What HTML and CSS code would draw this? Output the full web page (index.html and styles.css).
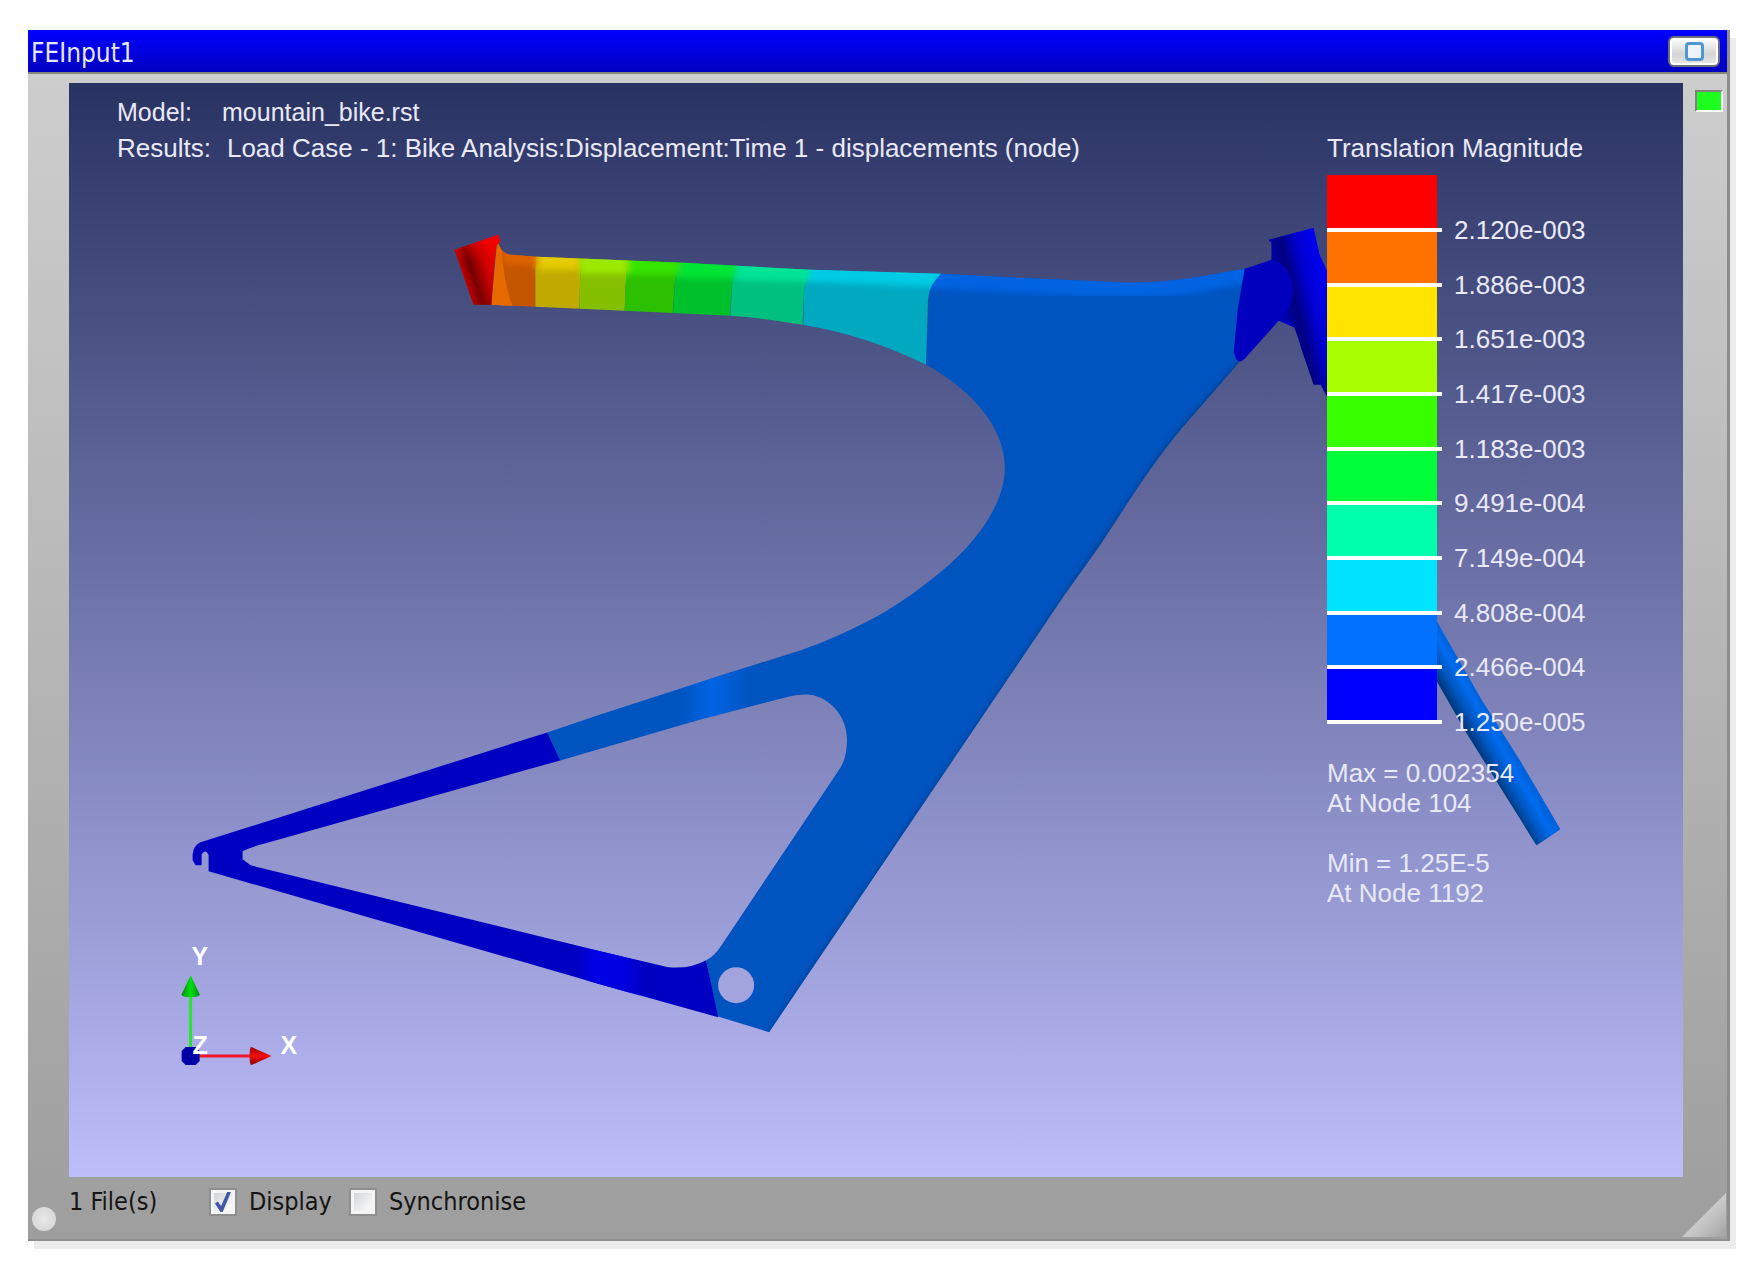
FILE: index.html
```html
<!DOCTYPE html>
<html lang="en">
<head>
<meta charset="utf-8">
<title>FEInput1</title>
<link rel="stylesheet" href="styles.css">
</head>
<body>
<div class="window">
  <header class="titlebar">
    <h1 class="title">FEInput1</h1>
    <button class="maximise" type="button" aria-label="Maximise"><span class="maximise-icon"></span></button>
  </header>

  <div class="workspace">
    <main class="viewport">
      <svg class="scene" viewBox="69 83 1614 1095" aria-hidden="true">
        <defs>
          <linearGradient id="redTube" gradientUnits="userSpaceOnUse" x1="462" y1="280" x2="498" y2="268">
            <stop offset="0" stop-color="#d80000"/><stop offset=".3" stop-color="#6e0000"/><stop offset=".65" stop-color="#c40000"/><stop offset="1" stop-color="#f00000"/>
          </linearGradient>
          <linearGradient id="redTop" x1="0" y1="0" x2="0" y2="1">
            <stop offset="0" stop-color="#ff0000" stop-opacity=".6"/><stop offset=".4" stop-color="#e00000" stop-opacity="0"/><stop offset="1" stop-color="#a00000" stop-opacity=".25"/>
          </linearGradient>
          <linearGradient id="strutLight" gradientUnits="userSpaceOnUse" x1="680" y1="0" x2="750" y2="0">
            <stop offset="0" stop-color="#0064e4" stop-opacity="0"/><stop offset=".45" stop-color="#0064e4"/><stop offset="1" stop-color="#0064e4" stop-opacity="0"/>
          </linearGradient>
          <linearGradient id="stayLight" gradientUnits="userSpaceOnUse" x1="575" y1="0" x2="645" y2="0">
            <stop offset="0" stop-color="#0000e6" stop-opacity="0"/><stop offset=".3" stop-color="#0000e6"/><stop offset=".7" stop-color="#0000e0"/><stop offset="1" stop-color="#0000e0" stop-opacity="0"/>
          </linearGradient>
          <linearGradient id="forkTube" gradientUnits="userSpaceOnUse" x1="1487" y1="764" x2="1511" y2="750">
            <stop offset="0" stop-color="#003a80"/><stop offset=".35" stop-color="#0056c0"/><stop offset=".75" stop-color="#006cf0"/><stop offset="1" stop-color="#0062dc"/>
          </linearGradient>
          <linearGradient id="headTube" gradientUnits="userSpaceOnUse" x1="1281" y1="310" x2="1332" y2="298">
            <stop offset="0" stop-color="#0000b4"/><stop offset=".3" stop-color="#000080"/><stop offset=".6" stop-color="#0000d0"/><stop offset="1" stop-color="#0000f6"/>
          </linearGradient>
          <linearGradient id="arrowGreen" x1="0" y1="0" x2="1" y2="0">
            <stop offset="0" stop-color="#008a10"/><stop offset=".5" stop-color="#00e010"/><stop offset="1" stop-color="#008a10"/>
          </linearGradient>
          <linearGradient id="arrowRed" x1="0" y1="0" x2="0" y2="1">
            <stop offset="0" stop-color="#a00000"/><stop offset=".5" stop-color="#f01010"/><stop offset="1" stop-color="#900000"/>
          </linearGradient>
          <filter id="soft" x="-10%" y="-50%" width="120%" height="200%"><feGaussianBlur stdDeviation="3"/></filter>
          <path id="bodyShape" d="M940 274 L1040 279 L1130 283 Q1165 283 1200 277 L1245 269 L1240 362 L1200 408 Q1165 446 1130 500 L1100 546 L1065 595 L1021 660 L769 1033 L717 1017 L706 961 Q714 957 720 948 L838 772 Q847 760 847 740 C847 714 826 695 806 695 Q798 695 789 697 L700 720 L560 761 L547 733 L600 715 L733 672 L800 651 C860 630 900 605 926 584 C975 548 1005 505 1005 468 C1005 428 972 390 926 365 L929 290 Z"/>
          <clipPath id="bodyClip"><use href="#bodyShape"/></clipPath>
          <path id="armShape" d="M497 240 Q500 255 512 255 L537 257 L683 263 L810 270 L941 274 Q929 285 928 300 L926 365 Q865 335 802 325 Q762 318 730 316 L625 311 L535 307 L491 305 Z"/>
          <clipPath id="armClip"><use href="#armShape"/></clipPath>
        </defs>

        <!-- main frame -->
        <use href="#bodyShape" fill="#0054c0"/>
        <g clip-path="url(#bodyClip)">
          <path d="M920 278 L1040 284 L1130 288 Q1165 288 1200 282 L1250 272" fill="none" stroke="#0064e2" stroke-width="20" filter="url(#soft)"/>
          <path d="M1245 360 L1200 411 Q1167 447 1132 502 L1067 597 L1023 662 L771 1035" fill="none" stroke="#003c88" stroke-width="6" filter="url(#soft)"/>
          <path d="M680 600 H750 V780 H680 Z" fill="url(#strutLight)"/>
        </g>

        <!-- graded arm -->
        <g clip-path="url(#armClip)">
          <path d="M480 230 H540 L535 270 V315 H480 Z" fill="#c45600"/>
          <path d="M480 230 H500 Q502 285 514 310 H480 Z" fill="#e66a00"/>
          <path d="M538 230 H577 L580 270 L579 320 H535 V270 Z" fill="#c0aa00"/>
          <path d="M577 230 H629 L626 275 L624 320 H579 L580 270 Z" fill="#84c000"/>
          <path d="M629 230 H682 L675 280 L672 320 H624 L626 275 Z" fill="#2cc000"/>
          <path d="M682 230 H742 L732 285 L729 325 H672 L675 280 Z" fill="#00c02c"/>
          <path d="M742 230 H818 L804 290 L802 335 H729 L732 285 Z" fill="#00c080"/>
          <path d="M818 230 H950 V375 H802 L804 290 Z" fill="#00a8c0"/>
          <g filter="url(#soft)">
            <path d="M500 252 L537 254 V266 L505 264 Z" fill="#e06400"/>
            <path d="M538 252 H578 V270 H537 Z" fill="#e4cc00"/>
            <path d="M579 252 H628 V274 H580 Z" fill="#9ce800"/>
            <path d="M629 254 H681 L678 275 H627 Z" fill="#34e400"/>
            <path d="M682 256 H739 L734 279 H678 Z" fill="#00e434"/>
            <path d="M740 258 H812 L808 282 L734 280 Z" fill="#00e498"/>
            <path d="M813 260 L950 266 L935 287 L808 282 Z" fill="#00cce6"/>
          </g>
        </g>
        <path d="M454 250 L498 235 L500 242 L496 246 L494 265 L491 305 H473 Z" fill="url(#redTube)"/>
        <path d="M454 250 L498 235 L500 242 L496 246 L494 265 L491 305 H473 Z" fill="url(#redTop)"/>

        <!-- head tube -->
        <path d="M1245 269 L1272 260 V243 L1269 240 L1300 232 L1300 330 L1279 321 L1245 359 Q1240 364 1237 360 L1234 353 L1238 310 Z" fill="#0000be"/>
        <path d="M1269 240 L1314 228 L1320 255 L1328 272 V398 L1321 385 H1314 L1302 350 Q1294 322 1290 321 H1279 Q1300 300 1290 275 Q1283 262 1272 260 V243 Z" fill="url(#headTube)"/>

        <!-- rear stays -->
        <path d="M547 733 L560 761 L265 844 Q252 847 242 852 V860 Q246 863 250 866 L600 952 L668 968 Q690 970 706 961 L718 1018 L600 985 L208 872 V856 Q205 849 201 855 V866 H195 L192 861 V855 Q193 846 200 843 Z" fill="#0000c2"/>
        <path d="M575 946 L645 963 V998 L575 978 Z" fill="url(#stayLight)"/>

        <circle cx="736" cy="986" r="18" fill="#a3a3de"/>

        <!-- fork leg -->
        <path d="M1430 608 L1438 623 L1482 700 L1520 760 L1561 830 L1548 839 L1537 846 L1466 732 L1438 683 L1430 668 Z" fill="url(#forkTube)"/>

        <!-- axis triad -->
        <path d="M190 1050 V996" stroke="#20e830" stroke-width="3"/>
        <path d="M190 976 L199 995 Q199 998 190 998 Q181 998 181 995 Z" fill="url(#arrowGreen)"/>
        <path d="M190 1057 H250" stroke="#f01828" stroke-width="3"/>
        <path d="M271 1057 L251 1066 Q249 1066 249 1057 Q249 1048 251 1048 Z" fill="url(#arrowRed)"/>
        <path d="M185 1048 H195 L199 1052 V1062 L195 1066 H185 L181 1062 V1052 Z" fill="#0000a8"/>
        <g class="axis-labels">
          <text x="191" y="966">Y</text>
          <text x="192" y="1055">Z</text>
          <text x="280" y="1055">X</text>
        </g>
      </svg>

      <dl class="model-info">
        <div class="info-row info-model"><dt>Model:</dt><dd>mountain_bike.rst</dd></div>
        <div class="info-row info-results"><dt>Results:</dt><dd>Load Case - 1: Bike Analysis:Displacement:Time 1 - displacements (node)</dd></div>
      </dl>

      <section class="legend">
        <h2 class="legend-title">Translation Magnitude</h2>
        <ul class="scale">
          <li class="band red"><span class="value">2.120e-003</span></li>
          <li class="band orange"><span class="value">1.886e-003</span></li>
          <li class="band yellow"><span class="value">1.651e-003</span></li>
          <li class="band lime"><span class="value">1.417e-003</span></li>
          <li class="band green"><span class="value">1.183e-003</span></li>
          <li class="band emerald"><span class="value">9.491e-004</span></li>
          <li class="band mint"><span class="value">7.149e-004</span></li>
          <li class="band cyan"><span class="value">4.808e-004</span></li>
          <li class="band azure"><span class="value">2.466e-004</span></li>
          <li class="band blue"><span class="value">1.250e-005</span></li>
        </ul>
        <p class="extreme">Max = 0.002354<br>At Node 104</p>
        <p class="extreme">Min = 1.25E-5<br>At Node 1192</p>
      </section>
    </main>
    <aside class="side"><span class="led"></span></aside>
  </div>

  <footer class="statusbar">
    <span class="knob"></span>
    <div class="status-items">
      <span class="files">1 File(s)</span>
      <label class="option option-display"><input class="tick" type="checkbox" checked>Display</label>
      <label class="option"><input class="tick" type="checkbox">Synchronise</label>
    </div>
    <svg class="grip" viewBox="0 0 44 44" aria-hidden="true">
      <defs><linearGradient id="gripFill" x1=".3" y1=".3" x2="1" y2="1"><stop offset="0" stop-color="#d8d8d8"/><stop offset=".5" stop-color="#c0c0c0"/><stop offset="1" stop-color="#a2a2a2"/></linearGradient></defs>
      <path d="M0 44 L44 0 V44 Z" fill="url(#gripFill)"/>
    </svg>
  </footer>
</div>
</body>
</html>
```
FILE: styles.css
```css
* { box-sizing: border-box; }

body {
  margin: 0;
  padding: 30px 31px 31px 28px;
  background: #fff;
  font-family: "DejaVu Sans Condensed", "DejaVu Sans", sans-serif;
}

h1, h2, p, ul, dl, dd { margin: 0; padding: 0; font-weight: normal; }

.window {
  display: flex;
  flex-direction: column;
  min-height: calc(100vh - 61px);
  border-right: 3px solid #8c8c8c;
  border-bottom: 2px solid #909090;
  background: linear-gradient(#cfcfcf, #9e9e9e);
  box-shadow: 6px 8px 0 #ececec, 0 -4px 0 #f7f9f7;
}

.titlebar {
  display: flex;
  align-items: center;
  justify-content: space-between;
  height: 44px;
  padding: 0 7px 0 3px;
  border-bottom: 2px solid #85857c;
  background: linear-gradient(#0000ff, #0000c0);
}

.title { padding-top: 4px; font-size: 26px; line-height: 38px; color: #e6e6ff; }

.maximise {
  display: flex;
  align-items: center;
  justify-content: center;
  width: 52px;
  height: 31px;
  padding: 0;
  border: 2px solid #6f6f78;
  border-radius: 6px;
  background: linear-gradient(#fff, #d4d4d4 60%, #e8e8e8);
  box-shadow: inset 0 0 0 2px #fff;
}

.maximise-icon {
  width: 19px;
  height: 19px;
  border: 3px solid #4f97d2;
  border-radius: 4px;
  background: #eef2ff;
}

.workspace { display: flex; flex: 1; padding: 9px 0 0 41px; }

.viewport {
  position: relative;
  display: flex;
  flex: 1;
  justify-content: space-between;
  align-items: flex-start;
  padding: 11px 0 0 48px;
  background: linear-gradient(#293362, #bdbdfa);
  font-family: "Liberation Sans", Arial, sans-serif;
  font-size: 26px;
  line-height: 30px;
  color: #e9e9f8;
}

.scene { position: absolute; inset: 0; width: 100%; height: 100%; }

.axis-labels { font-weight: bold; font-size: 25px; fill: #fff; }

.model-info, .legend { position: relative; }

.info-row { display: flex; line-height: 36px; white-space: nowrap; }
.info-model { gap: 30px; font-size: 25px; }
.info-results { gap: 16px; }

.legend { width: 356px; padding-top: 36px; }
.legend-title { font-size: 26px; line-height: 36px; }

.scale {
  display: grid;
  grid-template-rows: 57px repeat(9, 1fr);
  height: 549px;
  margin: 9px 0 34px;
  list-style: none;
}

.band {
  position: relative;
  display: flex;
  align-items: flex-end;
  width: 110px;
}

/* tick line, slightly wider than its band */
.band::after {
  content: "";
  position: absolute;
  left: 0;
  right: -5px;
  bottom: 0;
  height: 4px;
  background: #fff;
}

.value { margin: 0 0 -13px 127px; white-space: nowrap; }

.red { background: #ff0000; }
.orange { background: #ff7200; }
.yellow { background: #ffe400; }
.lime { background: #a8ff00; }
.green { background: #38ff00; }
.emerald { background: #00ff38; }
.mint { background: #00ffaa; }
.cyan { background: #00e4ff; }
.azure { background: #0072ff; }
.blue { background: #0000ff; }

.extreme { margin-bottom: 30px; }

.side { width: 44px; padding: 7px 0 0 12px; }

.led {
  display: block;
  width: 28px;
  height: 22px;
  border: 2px solid;
  border-color: #808080 #fff #fff #808080;
  background: #1cff1c;
}

.statusbar { display: flex; height: 62px; padding-right: 1px; }

.knob {
  align-self: flex-end;
  width: 24px;
  height: 24px;
  margin: 0 13px 8px 4px;
  border-radius: 50%;
  background: radial-gradient(#e8e8e8, #d2d2d2);
}

.status-items {
  display: flex;
  flex: 1;
  align-items: center;
  align-self: flex-start;
  height: 50px;
  font-size: 25px;
  line-height: 30px;
  color: #141414;
}

.files { width: 140px; }

.option { display: flex; align-items: center; gap: 12px; }
.option-display { width: 140px; }

.tick {
  display: grid;
  place-items: center;
  appearance: none;
  width: 28px;
  height: 28px;
  margin: 0;
  border: 2px solid #8e8e8e;
  background: linear-gradient(135deg, #c8ccd0, #f6f6f6 70%);
  box-shadow: inset 0 0 0 3px #f4f4f4;
}

.tick:checked::before {
  content: "";
  width: 16px;
  height: 20px;
  background: #4558a8;
  clip-path: polygon(0 58%, 18% 48%, 38% 70%, 76% 0, 100% 0, 48% 100%, 34% 100%);
}

.grip { align-self: flex-end; width: 44px; height: 44px; margin-bottom: 2px; }
```
